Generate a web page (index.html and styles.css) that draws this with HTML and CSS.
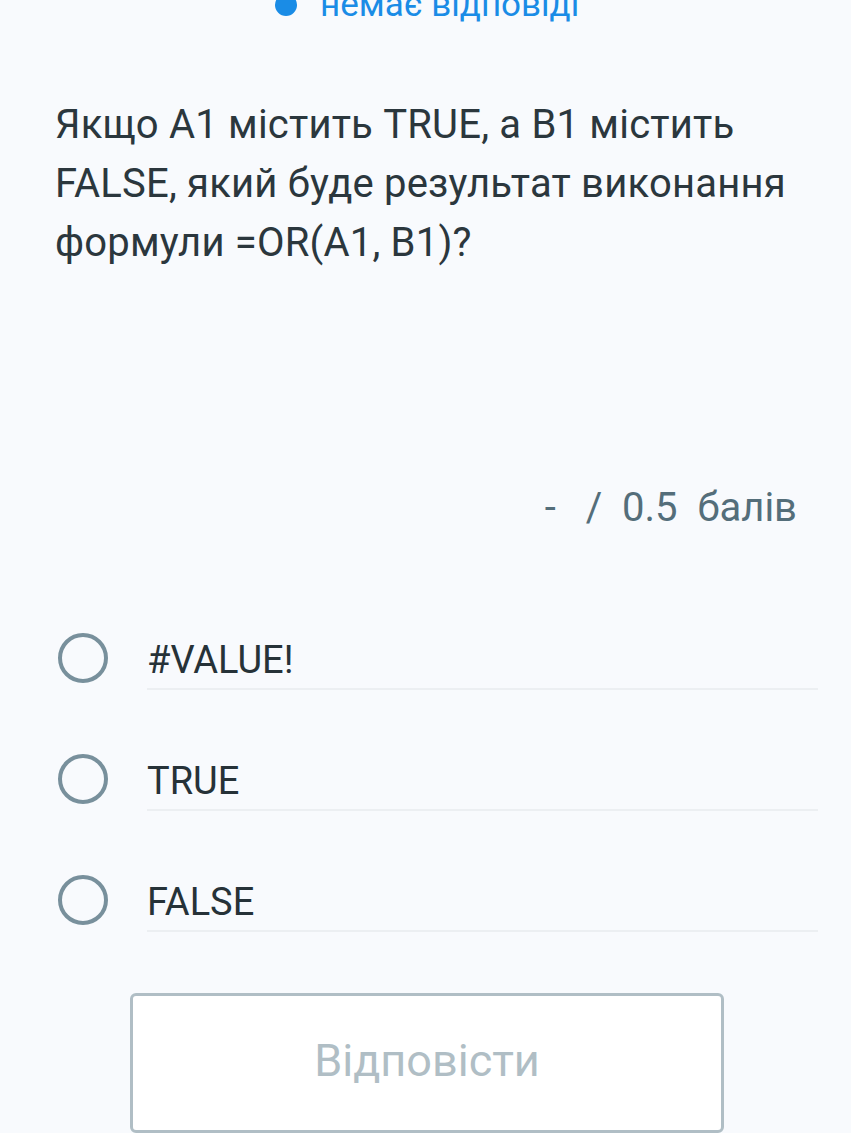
FILE: index.html
```html
<!DOCTYPE html>
<html lang="uk">
<head>
    <meta charset="UTF-8">
    <meta name="viewport" content="width=device-width, initial-scale=1.0">
    <title>Питання</title>
    <link rel="stylesheet" href="styles.css">
</head>
<body>
    <div class="quiz">
        <div class="status">
            <span class="status-dot"></span>
            <span class="status-text">немає відповіді</span>
        </div>

        <p class="question">Якщо A1 містить TRUE, а B1 містить FALSE, який буде результат виконання формули =OR(A1, B1)?</p>

        <div class="score">-&nbsp;&nbsp;&nbsp;/&nbsp;&nbsp;0.5&nbsp;&nbsp;балів</div>

        <div class="options">
            <label class="option">
                <span class="radio"></span>
                <span class="option-text">#VALUE!</span>
            </label>
            <label class="option">
                <span class="radio"></span>
                <span class="option-text">TRUE</span>
            </label>
            <label class="option">
                <span class="radio"></span>
                <span class="option-text">FALSE</span>
            </label>
        </div>

        <div class="actions">
            <button class="submit" disabled>Відповісти</button>
        </div>
    </div>
</body>
</html>
```

FILE: styles.css
```css
html, body {
    margin: 0;
    padding: 0;
}
body {
    font-family: Roboto, "Noto Sans", sans-serif;
    background-color: #f8fafd;
    color: #263238;
    height: 1133px;
    overflow: hidden;
}
.quiz {
    padding: 0 33px 0 55px;
}
.status {
    display: flex;
    align-items: center;
    gap: 23px;
    margin-top: -15px;
    padding-left: 220px;
    height: 40px;
    line-height: 40px;
    color: #1a8ce6;
    font-size: 35px;
}
.status-dot {
    width: 22px;
    height: 22px;
    border-radius: 50%;
    background-color: #1a8ce6;
}
.question {
    margin: 70px 0 0;
    font-size: 40px;
    line-height: 59px;
    letter-spacing: 0.2px;
    color: #2b373d;
}
.score {
    margin-top: 216px;
    padding-right: 21px;
    text-align: right;
    font-size: 40px;
    line-height: 40px;
    color: #546e7a;
}
.options {
    margin-top: 41px;
}
.option {
    display: flex;
    align-items: flex-end;
    height: 121px;
    margin-left: 3px;
}
.radio {
    width: 42px;
    height: 42px;
    border: 4px solid #78909c;
    border-radius: 50%;
    flex-shrink: 0;
    margin-bottom: 7px;
}
.option-text {
    flex: 1;
    margin-left: 39px;
    border-bottom: 2px solid #eceff2;
    font-size: 38px;
    line-height: 44px;
    padding-bottom: 6px;
}
.actions {
    margin-top: 61px;
    padding-left: 75px;
}
.submit {
    width: 594px;
    height: 140px;
    background-color: #ffffff;
    border: 3px solid #b0bec5;
    border-radius: 6px;
    font-family: Roboto, "Noto Sans", sans-serif;
    font-size: 45px;
    color: #b0bec5;
    padding: 0 0 6px;
}
```
